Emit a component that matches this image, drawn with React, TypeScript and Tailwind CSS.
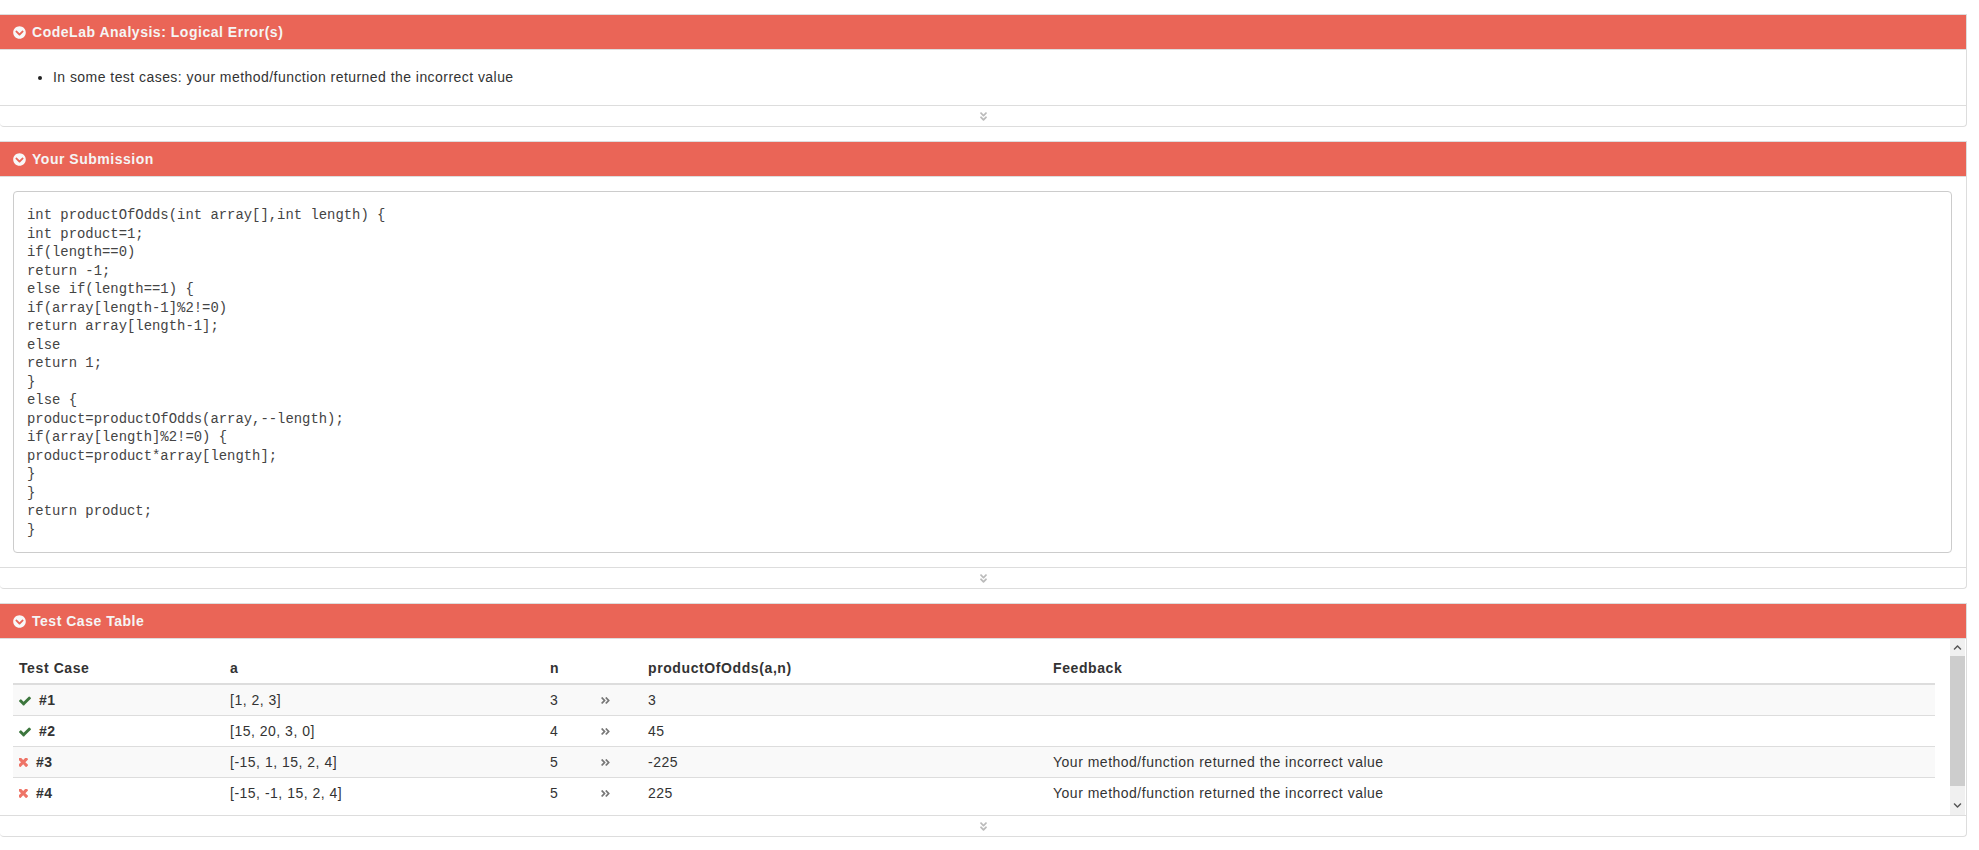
import React from "react";
import {
  FaAngleDoubleDown,
  FaAngleDoubleRight,
  FaChevronCircleDown,
  FaChevronDown,
  FaChevronUp,
} from "react-icons/fa";

const code = `int productOfOdds(int array[],int length) {
int product=1;
if(length==0)
return -1;
else if(length==1) {
if(array[length-1]%2!=0)
return array[length-1];
else
return 1;
}
else {
product=productOfOdds(array,--length);
if(array[length]%2!=0) {
product=product*array[length];
}
}
return product;
}`;

const rows = [
  { id: "#1", ok: true, a: "[1, 2, 3]", n: "3", value: "3", feedback: "" },
  { id: "#2", ok: true, a: "[15, 20, 3, 0]", n: "4", value: "45", feedback: "" },
  {
    id: "#3",
    ok: false,
    a: "[-15, 1, 15, 2, 4]",
    n: "5",
    value: "-225",
    feedback: "Your method/function returned the incorrect value",
  },
  {
    id: "#4",
    ok: false,
    a: "[-15, -1, 15, 2, 4]",
    n: "5",
    value: "225",
    feedback: "Your method/function returned the incorrect value",
  },
];

const CheckIcon = () => (
  <svg viewBox="121 300 1550 1250" className="h-[10px] w-[12px] fill-[#3c763d]">
    <path d="M1671 566q0 40-28 68l-724 724-136 136q-28 28-68 28t-68-28l-136-136-362-362q-28-28-28-68t28-68l136-136q28-28 68-28t68 28l294 295 656-657q28-28 68-28t68 28l136 136q28 28 28 68z" />
  </svg>
);

const CrossIcon = () => (
  <svg viewBox="188 346 1110 1100" className="mr-[1px] h-[9px] w-[9px] fill-[#ee7467]">
    <path d="M1298 1214q0 40-28 68l-136 136q-28 28-68 28t-68-28l-294-294-294 294q-28 28-68 28t-68-28l-136-136q-28-28-28-68t28-68l294-294-294-294q-28-28-28-68t28-68l136-136q28-28 68-28t68 28l294 294 294-294q28-28 68-28t68 28l136 136q28 28 28 68t-28 68l-294 294 294 294q28 28 28 68z" />
  </svg>
);

const Panel = ({ title, children }: { title: string; children: React.ReactNode }) => (
  <section className="mb-[14px] rounded-b-[4px] border-b border-r border-[#ddd] bg-white">
    <header className="flex h-[36px] items-center gap-[6px] border-t border-b border-[#ddd] bg-[#ea6557] pl-[13px] text-[14px] font-bold tracking-[0.52px] text-[#f5f5f5]">
      <FaChevronCircleDown className="text-[13px] text-[#f8f8f8]" />
      <span>{title}</span>
    </header>
    {children}
    <footer className="flex h-[21px] items-center justify-center border-t border-[#ddd]">
      <FaAngleDoubleDown className="text-[11px] text-[#bbb]" />
    </footer>
  </section>
);

const App = () => {
  return (
    <div className="min-h-[850px] bg-white pt-[14px] pr-[12px] font-['Liberation_Sans',Arial,sans-serif] text-[14px] text-[#333]">
      <Panel title="CodeLab Analysis: Logical Error(s)">
        <div className="h-[55px] pt-[17px] pl-[40px] tracking-[0.45px]">
          <ul className="list-disc pl-[13px] leading-[20px] marker:text-[#222]">
            <li>In some test cases: your method/function returned the incorrect value</li>
          </ul>
        </div>
      </Panel>

      <Panel title="Your Submission">
        <div className="h-[390px] pt-[14px] pr-[14px] pl-[13px]">
          <pre className="h-[362px] rounded-[4px] border border-[#ccc] pt-[14px] pl-[13px] font-['Liberation_Mono','Courier_New',monospace] text-[13.9px] leading-[18.5px] text-[#444]">
            {code}
          </pre>
        </div>
      </Panel>

      <Panel title="Test Case Table">
        <div className="flex h-[176px]">
          <div className="flex-1 pt-[14px] pr-[15px] pl-[13px]">
            <table className="w-full table-fixed border-collapse">
              <thead>
                <tr className="h-[31px] border-b-2 border-[#ddd] text-left tracking-[0.6px]">
                  <th className="w-[217px] pl-[6px] font-bold">Test Case</th>
                  <th className="w-[320px] font-bold">a</th>
                  <th className="w-[50px] font-bold">n</th>
                  <th className="w-[48px]"></th>
                  <th className="w-[405px] font-bold">productOfOdds(a,n)</th>
                  <th className="font-bold">Feedback</th>
                </tr>
              </thead>
              <tbody className="tracking-[0.5px]">
                {rows.map((r, i) => (
                  <tr
                    key={r.id}
                    className={`h-[31px] ${i < 3 ? "border-b border-[#ddd]" : ""} ${i % 2 === 0 ? "bg-[#f9f9f9]" : ""}`}
                  >
                    <td className="pt-[2px] pl-[6px] font-bold">
                      {r.ok ? (
                        <span className="flex items-center gap-[8px]">
                          <CheckIcon />
                          {r.id}
                        </span>
                      ) : (
                        <span className="flex items-center gap-[7px]">
                          <CrossIcon />
                          {r.id}
                        </span>
                      )}
                    </td>
                    <td className="pt-[2px]">{r.a}</td>
                    <td className="pt-[2px]">{r.n}</td>
                    <td className="pt-[2px]">
                      <FaAngleDoubleRight className="text-[11px] text-[#777]" />
                    </td>
                    <td className="pt-[2px]">{r.value}</td>
                    <td className="pt-[2px]">{r.feedback}</td>
                  </tr>
                ))}
              </tbody>
            </table>
          </div>
          <div className="mr-[1px] flex w-[15px] flex-col bg-[#f0f0f0]">
            <div className="flex h-[17px] items-center justify-center">
              <FaChevronUp className="text-[9px] text-[#555]" />
            </div>
            <div className="h-[130px] bg-[#cdcdcd]"></div>
            <div className="flex flex-1 items-end justify-center pb-[5px]">
              <FaChevronDown className="text-[9px] text-[#555]" />
            </div>
          </div>
        </div>
      </Panel>
    </div>
  );
};

export default App;
